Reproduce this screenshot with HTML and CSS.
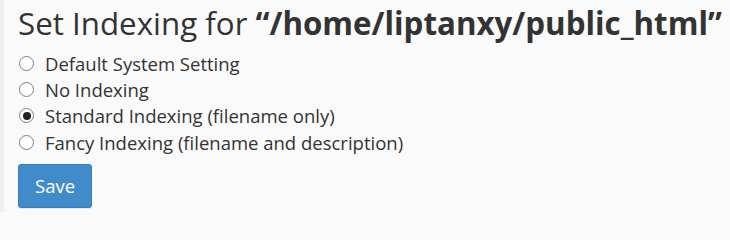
FILE: index.html
```html
<!DOCTYPE html>
<html lang="en">
<head>
<meta charset="utf-8">
<title>Set Indexing</title>
<link rel="stylesheet" href="styles.css">
</head>
<body>
<div class="page">
  <h1 class="title">Set Indexing for <strong>“/home/liptanxy/public_html”</strong></h1>
  <form class="form">
    <label class="option"><input type="radio" name="idx" class="radio"><span>Default System Setting</span></label>
    <label class="option"><input type="radio" name="idx" class="radio"><span>No Indexing</span></label>
    <label class="option"><input type="radio" name="idx" class="radio" checked><span>Standard Indexing (filename only)</span></label>
    <label class="option"><input type="radio" name="idx" class="radio"><span>Fancy Indexing (filename and description)</span></label>
    <button type="button" class="btn">Save</button>
  </form>
</div>
</body>
</html>
```

FILE: styles.css
```css
html, body {
  margin: 0;
  padding: 0;
  background: #fafafa;
  overflow: hidden;
}
body {
  font-family: "Open Sans", "Liberation Sans", sans-serif;
  color: #333;
  width: 730px;
  height: 212px;
}
.page {
  border-left: 4px solid #f0f0f0;
  padding: 0 0 0 14px;
  height: 212px;
  box-sizing: border-box;
}
.title {
  margin: 0;
  padding-top: 5px;
  font-size: 31.3px;
  font-weight: 400;
  line-height: 37px;
  color: #333;
  white-space: nowrap;
}
.title strong {
  font-weight: 700;
}
.form {
  display: flex;
  flex-direction: column;
  align-items: flex-start;
  margin-top: 8px;
}
.option {
  display: flex;
  align-items: center;
  gap: 11px;
  height: 26.3px;
  font-size: 18.5px;
  color: #333;
}
.radio {
  appearance: none;
  -webkit-appearance: none;
  margin: 0 0 0 1px;
  width: 15px;
  height: 15px;
  flex: 0 0 15px;
  border: 1.5px solid #808080;
  border-radius: 50%;
  background: #fff;
  box-sizing: border-box;
  display: grid;
  place-items: center;
}
.radio:checked::after {
  content: "";
  width: 8px;
  height: 8px;
  border-radius: 50%;
  background: #222;
}
.btn {
  margin-top: 9px;
  font-family: inherit;
  font-size: 18.5px;
  line-height: 22px;
  padding: 10px 16px;
  color: #fff;
  background: #428bca;
  border: 1px solid #357ebd;
  border-radius: 3px;
  box-shadow: 0 1px 1px rgba(0,0,0,0.08);
}
```
